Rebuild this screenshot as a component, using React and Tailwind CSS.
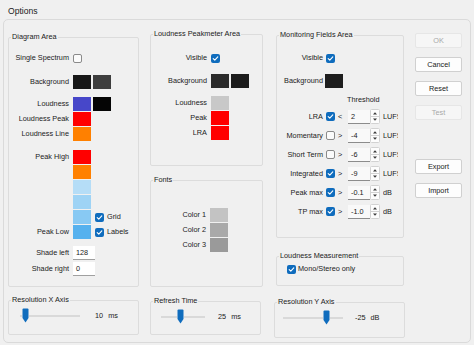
const Check = ({ checked }) =>
  checked ? (
    <span className="flex h-[9px] w-[9px] shrink-0 items-center justify-center rounded-[2px] bg-[#0f6cbd]">
      <svg width="7" height="7" viewBox="0 0 7 7">
        <path
          d="M1.2 3.7 L2.8 5.2 L5.8 1.9"
          fill="none"
          stroke="white"
          strokeWidth="1.1"
          strokeLinecap="round"
          strokeLinejoin="round"
        />
      </svg>
    </span>
  ) : (
    <span className="block h-[9px] w-[9px] shrink-0 rounded-[2px] border border-[#8a8a8a] bg-[#fbfbfb]" />
  );

const Swatch = ({ color }) => <div className={`h-[14px] w-[18px] shrink-0 ${color}`} />;

const Group = ({ title, className, children }) => (
  <fieldset className={`rounded-[2px] border border-[#dcdcdc] ${className}`}>
    <legend className="ml-[2px] px-[1px] leading-[10px]">{title}</legend>
    <div className="flex flex-col">{children}</div>
  </fieldset>
);

const Row = ({ label, labelWidth, gap = "gap-[4px]", className = "", children }) => (
  <div className={`flex items-center ${gap} ${className}`}>
    <span className={`shrink-0 text-right whitespace-nowrap ${labelWidth}`}>{label}</span>
    {children}
  </div>
);

const Thumb = () => (
  <svg width="7" height="15" viewBox="0 0 7 15" className="shrink-0">
    <path d="M0.5 1.5 Q0.5 0.5 1.5 0.5 H5.5 Q6.5 0.5 6.5 1.5 V10 L3.5 14.5 L0.5 10 Z" fill="#0f6cbd" />
  </svg>
);

const Slider = ({ before, after, value, unit, pad, textGap }) => (
  <div className={`mt-[3px] flex h-[15px] items-center ${pad}`}>
    <div className={`h-[2px] bg-[#d9d9d9] ${before}`} />
    <Thumb />
    <div className={`h-[2px] bg-[#d9d9d9] ${after}`} />
    <span className={textGap}>{value}</span>
    <span className="ml-[5px]">{unit}</span>
  </div>
);

const Spinner = () => (
  <svg width="10" height="15" viewBox="0 0 10 15" className="shrink-0">
    <rect x="0.5" y="0.5" width="9" height="14" rx="1" fill="#fdfdfd" stroke="#d2d2d2" />
    <line x1="1" y1="7.5" x2="9" y2="7.5" stroke="#d2d2d2" />
    <path d="M3 5.6 L5 3.2 L7 5.6 Z" fill="#3a3a3a" />
    <path d="M3 9.4 L5 11.8 L7 9.4 Z" fill="#3a3a3a" />
  </svg>
);

const monitorRows = [
  { label: "LRA", checked: true, cmp: "<", value: "2", unit: "LUFS" },
  { label: "Momentary", checked: false, cmp: ">", value: "-4", unit: "LUFS" },
  { label: "Short Term", checked: false, cmp: ">", value: "-6", unit: "LUFS" },
  { label: "Integrated", checked: true, cmp: ">", value: "-9", unit: "LUFS" },
  { label: "Peak max", checked: true, cmp: ">", value: "-0.1", unit: "dB" },
  { label: "TP max", checked: true, cmp: ">", value: "-1.0", unit: "dB" },
];

const Button = ({ children, disabled, className = "" }) => (
  <button
    disabled={disabled}
    className={`flex h-[15px] w-[47px] items-center justify-center rounded-[2px] border leading-none ${
      disabled ? "border-[#e6e6e6] bg-[#f6f6f6] text-[#a8a8a8]" : "border-[#d0d0d0] bg-[#fdfdfd] text-[#1a1a1a]"
    } ${className}`}
  >
    {children}
  </button>
);

export default function App() {
  return (
    <div className="h-[345px] w-[474px] overflow-hidden bg-[#f0f0f0] font-['Liberation_Sans',Arial,sans-serif] text-[7.3px] leading-[10px] text-[#1b1b1b]">
      <div className="flex h-[19px] items-center pl-[8px] pt-[2px] text-[8.6px]">Options</div>

      <div className="mx-[3px] flex h-[324px] rounded-[5px] border border-[#dadada] bg-[#f0f0f0] pl-[4px]">
        {/* column 1 */}
        <div className="mt-[12px] flex w-[131px] flex-col">
          <Group title="Diagram Area" className="h-[255px]">
            <Row label="Single Spectrum" labelWidth="w-[60px]" className="mt-[11px] h-[10px]">
              <Check />
            </Row>
            <Row label="Background" labelWidth="w-[60px]" className="mt-[12px]" gap="gap-[4px]">
              <div className="flex gap-[2px]">
                <Swatch color="bg-[#171717]" />
                <Swatch color="bg-[#3e3e3e]" />
              </div>
            </Row>
            <Row label="Loudness" labelWidth="w-[60px]" className="mt-[8px]">
              <div className="flex gap-[2px]">
                <Swatch color="bg-[#4747c9]" />
                <Swatch color="bg-[#050505]" />
              </div>
            </Row>
            <Row label="Loudness Peak" labelWidth="w-[60px]" className="mt-[1px]">
              <Swatch color="bg-[#ff0000]" />
            </Row>
            <Row label="Loudness Line" labelWidth="w-[60px]" className="mt-[1px]">
              <Swatch color="bg-[#ff8000]" />
            </Row>
            <Row label="Peak High" labelWidth="w-[60px]" className="mt-[9px]">
              <Swatch color="bg-[#ff0000]" />
            </Row>
            <Row label="" labelWidth="w-[60px]" className="mt-[1px]">
              <Swatch color="bg-[#ff8000]" />
            </Row>
            <Row label="" labelWidth="w-[60px]" className="mt-[1px]">
              <Swatch color="bg-[#b5ddf7]" />
            </Row>
            <Row label="" labelWidth="w-[60px]" className="mt-[1px]">
              <Swatch color="bg-[#9ed3f5]" />
            </Row>
            <Row label="" labelWidth="w-[60px]" className="mt-[1px]">
              <Swatch color="bg-[#88c9f3]" />
              <Check checked />
              <span className="-ml-[1px]">Grid</span>
            </Row>
            <Row label="Peak Low" labelWidth="w-[60px]" className="mt-[1px]">
              <Swatch color="bg-[#56b1ee]" />
              <Check checked />
              <span className="-ml-[1px]">Labels</span>
            </Row>
            <Row label="Shade left" labelWidth="w-[60px]" className="mt-[7px]">
              <div className="h-[14px] w-[22px] border-b border-[#a0a0a0] bg-white pl-[3px] leading-[14px]">128</div>
            </Row>
            <Row label="Shade right" labelWidth="w-[60px]" className="mt-[2px]">
              <div className="h-[14px] w-[22px] border-b border-[#a0a0a0] bg-white pl-[3px] leading-[14px]">0</div>
            </Row>
          </Group>

          <Group title="Resolution X Axis" className="mt-[8px] h-[40px]">
            <Slider pad="pl-[11px]" before="w-[2px]" after="w-[51px]" value="10" unit="ms" textGap="ml-[15px]" />
          </Group>
        </div>

        {/* column 2 */}
        <div className="ml-[11px] mt-[9px] flex w-[113px] flex-col">
          <Group title="Loudness Peakmeter Area" className="h-[137px]">
            <Row label="Visible" labelWidth="w-[56px]" className="mt-[14px] h-[10px]">
              <Check checked />
            </Row>
            <Row label="Background" labelWidth="w-[56px]" className="mt-[11px]">
              <div className="flex gap-[2px]">
                <Swatch color="bg-[#2b2b2b]" />
                <Swatch color="bg-[#1c1c1c]" />
              </div>
            </Row>
            <Row label="Loudness" labelWidth="w-[56px]" className="mt-[8px]">
              <Swatch color="bg-[#c8c8c8]" />
            </Row>
            <Row label="Peak" labelWidth="w-[56px]" className="mt-[1px]">
              <Swatch color="bg-[#ff0000]" />
            </Row>
            <Row label="LRA" labelWidth="w-[56px]" className="mt-[1px]">
              <Swatch color="bg-[#ff0000]" />
            </Row>
          </Group>

          <Group title="Fonts" className="mt-[9px] h-[112px]">
            <Row label="Color 1" labelWidth="w-[55px]" className="mt-[23px]">
              <Swatch color="bg-[#c3c3c3]" />
            </Row>
            <Row label="Color 2" labelWidth="w-[55px]" className="mt-[1px]">
              <Swatch color="bg-[#a9a9a9]" />
            </Row>
            <Row label="Color 3" labelWidth="w-[55px]" className="mt-[1px]">
              <Swatch color="bg-[#9a9a9a]" />
            </Row>
          </Group>

          <Group title="Refresh Time" className="mt-[9px] h-[39px] w-[111px]">
            <Slider pad="pl-[10px]" before="w-[16px]" after="w-[21px]" value="25" unit="ms" textGap="ml-[13px]" />
          </Group>
        </div>

        {/* column 3 */}
        <div className="ml-[13px] mt-[10px] flex w-[128px] flex-col">
          <Group title="Monitoring Fields Area" className="h-[208px]">
            <Row label="Visible" labelWidth="w-[46px]" gap="gap-[3px]" className="mt-[13px] h-[10px]">
              <Check checked />
            </Row>
            <Row label="Background" labelWidth="w-[46px]" gap="gap-[2px]" className="mt-[11px]">
              <Swatch color="bg-[#1e1e1e]" />
            </Row>
            <div className="mt-[7px] h-[10px] pl-[70px]">Threshold</div>
            <div className="mt-[2px] flex flex-col">
              {monitorRows.map((r) => (
                <Row key={r.label} label={r.label} labelWidth="w-[46px]" gap="gap-[3px]" className="h-[19px]">
                  <Check checked={r.checked} />
                  <span className="-ml-[3px] w-[13px] shrink-0 pl-[3px]">{r.cmp}</span>
                  <div className="-ml-[3px] flex items-center">
                    <div className="h-[14px] w-[22px] border-b border-[#8c8c8c] bg-[#f9f9f9] pl-[3px] leading-[14px]">
                      {r.value}
                    </div>
                    <Spinner />
                    <span className="ml-[3px] w-[15px] overflow-hidden whitespace-nowrap">{r.unit}</span>
                  </div>
                </Row>
              ))}
            </div>
          </Group>

          <Group title="Loudness Measurement" className="mt-[13px] h-[35px]">
            <div className="mt-[3px] flex items-center gap-[2px] pl-[10px]">
              <Check checked />
              <span>Mono/Stereo only</span>
            </div>
          </Group>

          <Group title="Resolution Y Axis" className="-ml-[2px] mt-[11px] h-[41px] w-[131px]">
            <Slider pad="pl-[8px]" before="w-[40px]" after="w-[13px]" value="-25" unit="dB" textGap="ml-[12px]" />
          </Group>
        </div>

        {/* buttons */}
        <div className="ml-[11px] mt-[13px] flex w-[47px] flex-col">
          <Button disabled>OK</Button>
          <Button className="mt-[9px]">Cancel</Button>
          <Button className="mt-[9px]">Reset</Button>
          <Button disabled className="mt-[9px]">
            Test
          </Button>
          <Button className="mt-[39px]">Export</Button>
          <Button className="mt-[9px]">Import</Button>
        </div>
      </div>
    </div>
  );
}
